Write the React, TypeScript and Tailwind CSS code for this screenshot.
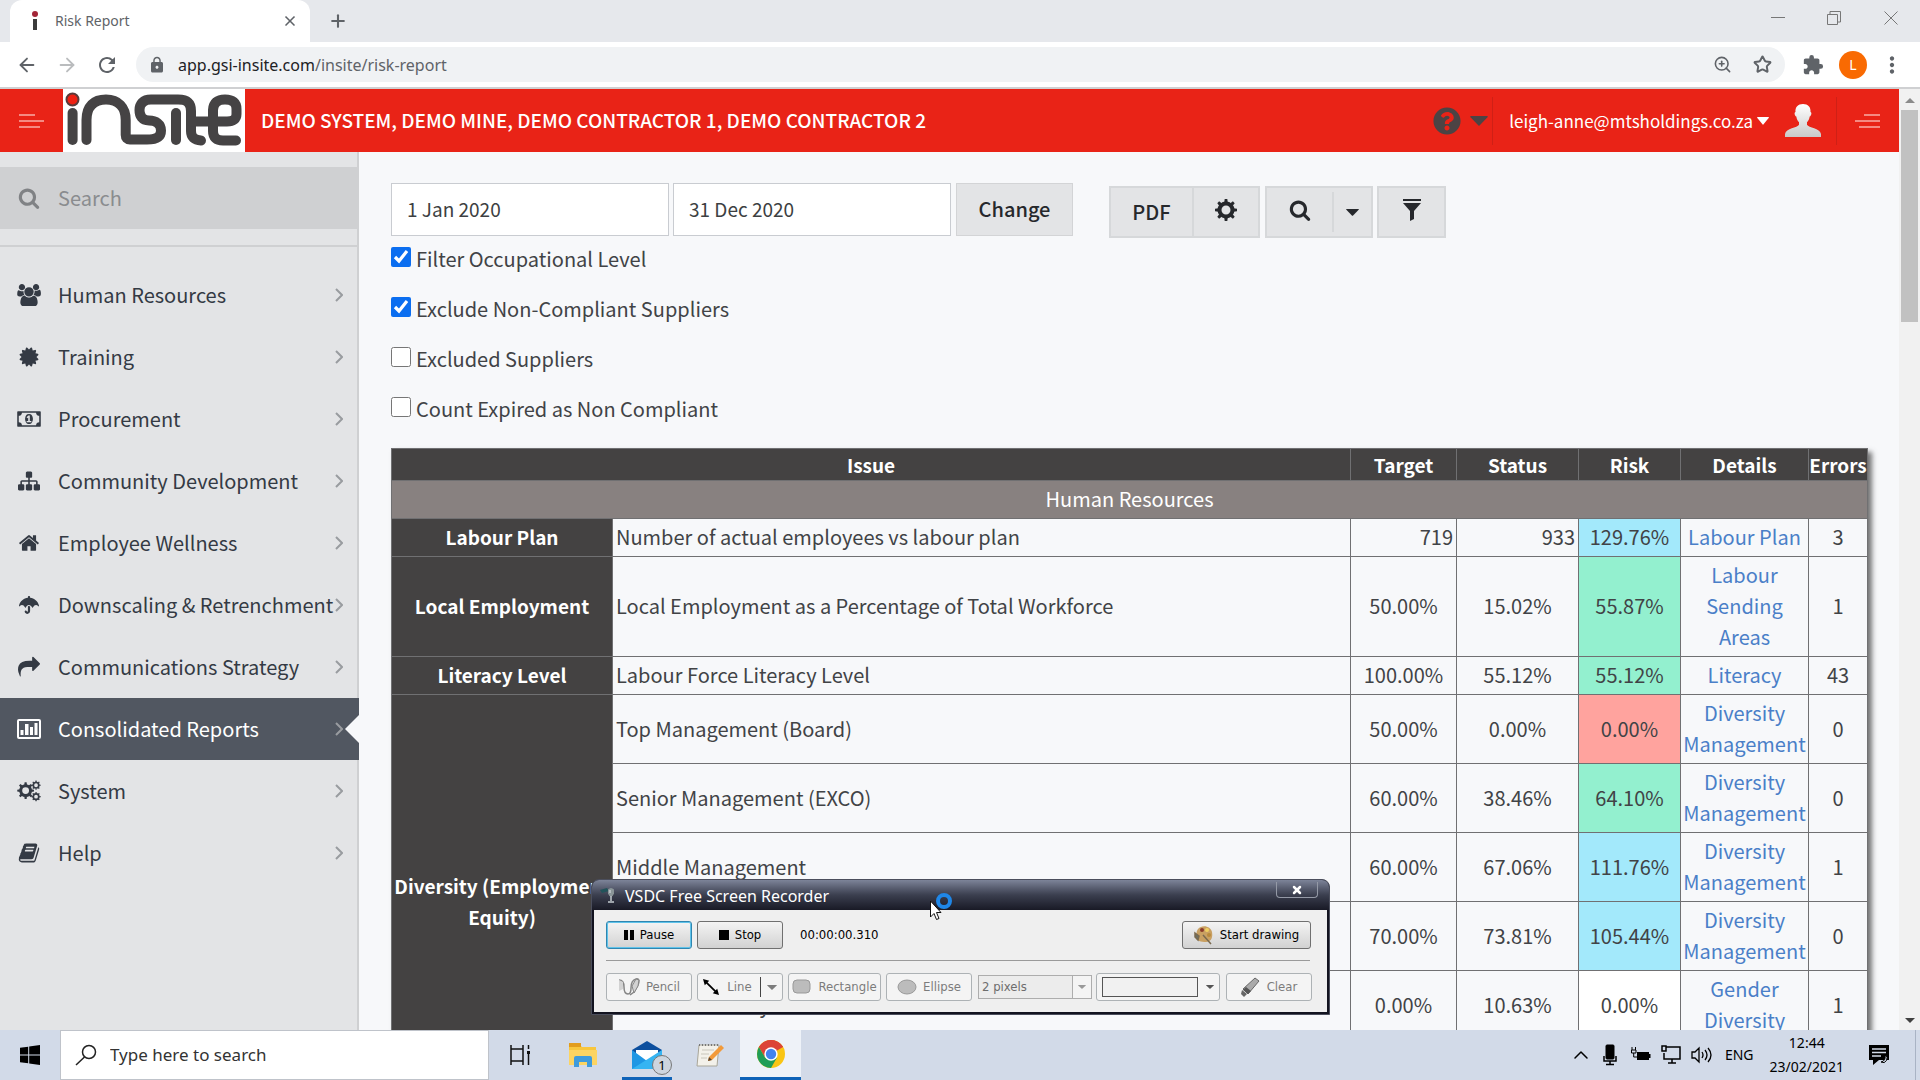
import type { ReactNode } from "react";
import { ArrowLeft, ArrowRight, Plus, X, ZoomIn, Star, ChevronUp } from "lucide-react";
import { FaQuestionCircle, FaUmbrella } from "react-icons/fa";
import { MdExtension, MdLock, MdMoreVert, MdRefresh } from "react-icons/md";

const icons = {
  search:
    "M1216 832q0-185-131.5-316.5t-316.5-131.5-316.5 131.5-131.5 316.5 131.5 316.5 316.5 131.5 316.5-131.5 131.5-316.5zm512 832q0 52-38 90t-90 38q-54 0-90-38l-343-342q-179 124-399 124-143 0-273.5-55.5t-225-150-150-225-55.5-273.5 55.5-273.5 150-225 225-150 273.5-55.5 273.5 55.5 225 150 150 225 55.5 273.5q0 220-124 399l343 343q37 37 37 90z",
  users:
    "M593 896q-162 5-265 128h-134q-82 0-138-40.5t-56-118.5q0-353 124-353 6 0 43.5 21t97.5 42.5 119 21.5q67 0 133-23-5 37-5 66 0 159 93 293zm1071 637q0 120-73 189.5t-194 69.5h-874q-121 0-194-69.5t-73-189.5q0-53 3.5-103.5t14-109 26.5-108.5 43-97.5 62-81 85.5-53.5 111.5-20q10 0 43 21.5t73 48 107 48 135 21.5 135-21.5 107-48 73-48 43-21.5q61 0 111.5 20t85.5 53.5 62 81 43 97.5 26.5 108.5 14 109 3.5 103.5zm-1024-1277q0 106-75 181t-181 75-181-75-75-181 75-181 181-75 181 75 75 181zm704 384q0 159-112.5 271.5t-271.5 112.5-271.5-112.5-112.5-271.5 112.5-271.5 271.5-112.5 271.5 112.5 112.5 271.5zm576 225q0 78-56 118.5t-138 40.5h-134q-103-123-265-128 93-134 93-293 0-29-5-66 66 23 133 23 59 0 119-21.5t97.5-42.5 43.5-21q124 0 124 353zm-128-609q0 106-75 181t-181 75-181-75-75-181 75-181 181-75 181 75 75 181z",
  certificate:
    "M1504 896l138 135q30 28 20 70-12 41-52 51l-188 48 53 186q12 41-19 70-29 31-70 19l-186-53-48 188q-10 40-51 52-12 2-19 2-31 0-51-22l-135-138-135 138q-28 30-70 20-41-11-51-52l-48-188-186 53q-41 12-70-19-31-29-19-70l53-186-188-48q-40-10-52-51-10-42 20-70l138-135-138-135q-30-28-20-70 12-41 52-51l188-48-53-186q-12-41 19-70 29-31 70-19l186 53 48-188q10-41 51-51 41-12 70 19l135 139 135-139q29-30 70-19 41 10 51 51l48 188 186-53q41-12 70 19 31 29 19 70l-53 186 188 48q40 10 52 51 10 42-20 70z",
  money:
    "M768 1152h384v-96h-128v-448h-114l-148 137 77 80q42-37 55-57h2v288h-128v96zm512-256q0 70-21 142t-59.5 134-101.5 101-138 39-138-39-101.5-101-59.5-134-21-142 21-142 59.5-134 101.5-101 138-39 138 39 101.5 101 59.5 134 21 142zm512 256v-512q-106 0-181-75t-75-181h-1152q0 106-75 181t-181 75v512q106 0 181 75t75 181h1152q0-106 75-181t181-75zm128-832v1152q0 26-19 45t-45 19h-1792q-26 0-45-19t-19-45v-1152q0-26 19-45t45-19h1792q26 0 45 19t19 45z",
  sitemap:
    "M1792 1248v320q0 40-28 68t-68 28h-320q-40 0-68-28t-28-68v-320q0-40 28-68t68-28h96v-192h-512v192h96q40 0 68 28t28 68v320q0 40-28 68t-68 28h-320q-40 0-68-28t-28-68v-320q0-40 28-68t68-28h96v-192h-512v192h96q40 0 68 28t28 68v320q0 40-28 68t-68 28h-320q-40 0-68-28t-28-68v-320q0-40 28-68t68-28h96v-192q0-52 38-90t90-38h512v-192h-96q-40 0-68-28t-28-68v-320q0-40 28-68t68-28h320q40 0 68 28t28 68v320q0 40-28 68t-68 28h-96v192h512q52 0 90 38t38 90v192h96q40 0 68 28t28 68z",
  home: "M1472 992v480q0 26-19 45t-45 19h-384v-384h-256v384h-384q-26 0-45-19t-19-45v-480q0-1 .5-3t.5-3l575-474 575 474q1 2 1 6zm223-69l-62 74q-8 9-21 11h-3q-13 0-21-7l-692-577-692 577q-12 8-24 7-13-2-21-11l-62-74q-8-10-7-23.5t11-21.5l719-599q32-26 76-26t76 26l244 204v-195q0-14 9-23t23-9h192q14 0 23 9t9 23v408l219 182q10 8 11 21.5t-7 23.5z",
  share:
    "M1792 640q0 26-19 45l-512 512q-19 19-45 19t-45-19-19-45v-256h-224q-98 0-175.5 6t-154 21.5-133 42.5-105.5 69.5-80 101-48.5 138.5-17.5 181q0 55 5 123 0 6 2.5 23.5t2.5 26.5q0 15-8.5 25t-23.5 10q-16 0-28-17-7-9-13-22t-13.5-30-10.5-24q-127-285-127-451 0-199 53-333 162-403 875-403h224v-256q0-26 19-45t45-19 45 19l512 512q19 19 19 45z",
  book: "M1703 478q40 57 18 129l-275 906q-19 64-76.5 107.5t-122.5 43.5h-923q-77 0-148.5-53.5t-99.5-131.5q-24-67-2-127 0-4 3-27t4-37q1-8-3-21.5t-3-19.5q2-11 8-21t16.5-23.5 16.5-23.5q23-38 45-91.5t30-91.5q3-10 .5-30t-.5-28q3-11 17-28t17-23q21-36 42-92t25-90q1-9-2.5-32t.5-28q4-13 22-30.5t22-22.5q19-26 42.5-84.5t27.5-96.5q1-8-3-25.5t-2-26.5q2-8 9-18t18-23 17-21q8-12 16.5-30.5t15-35 16-36 19.5-32 26.5-23.5 36-11.5 47.5 5.5l-1 3q38-9 51-9h761q74 0 114 56t18 130l-274 906q-36 119-71.5 153.5t-128.5 34.5h-869q-27 0-38 15-11 16-1 43 24 70 144 70h923q29 0 56-15.5t35-41.5l300-987q7-22 5-57 38 15 59 43zm-1064 2q-4 13 2 22.5t20 9.5h608q13 0 25.5-9.5t16.5-22.5l21-64q4-13-2-22.5t-20-9.5h-608q-13 0-25.5 9.5t-16.5 22.5zm-83 256q-4 13 2 22.5t20 9.5h608q13 0 25.5-9.5t16.5-22.5l21-64q4-13-2-22.5t-20-9.5h-608q-13 0-25.5 9.5t-16.5 22.5z",
};

const Glyph = ({ d, wide = false, className = "size-[22px]" }: { d: string; wide?: boolean; className?: string }) => (
  <svg viewBox={wide ? "0 0 1920 1792" : "0 0 1792 1792"} fill="currentColor" className={className} aria-hidden="true">
    <path d={d} />
  </svg>
);

const Caret = ({ className }: { className: string }) => (
  <svg viewBox="0 0 18 10" preserveAspectRatio="none" fill="currentColor" className={className} aria-hidden="true">
    <path d="M1 0h16q1.500 0 .5 1.200l-8 8.300q-.5.500-1 0l-8-8.300Q-.5 0 1 0z" />
  </svg>
);

const teeth = [0, 45, 90, 135, 180, 225, 270, 315];

const GearShape = () => (
  <>
    <circle cx="12" cy="12" r="6.500" fill="none" stroke="currentColor" strokeWidth="4" />
    {teeth.map((angle) => (
      <path key={angle} d="M10.200 4.500 10.700 1h2.600l.5 3.500z" fill="currentColor" transform={`rotate(${angle} 12 12)`} />
    ))}
  </>
);

const Gears = () => (
  <svg viewBox="0 0 24 22" className="h-[22px] w-6" aria-hidden="true">
    <g transform="translate(-.5 1.5) scale(.76)">
      <GearShape />
    </g>
    <g transform="translate(14 .2) scale(.42)">
      <GearShape />
    </g>
    <g transform="translate(14 11.6) scale(.42)">
      <GearShape />
    </g>
  </svg>
);

const BarChart = () => (
  <svg viewBox="0 0 24 20" className="h-5 w-6" aria-hidden="true">
    <rect x="1" y="1" width="22" height="18" rx="1" fill="none" stroke="currentColor" strokeWidth="2" />
    <path d="M3.500 11h3v5h-3zM8 5h3.500v11H8zM13 8h3v8h-3zM17.500 4h3v12h-3z" fill="currentColor" />
  </svg>
);

const Logo = () => (
  <svg viewBox="0 0 182 63" className="h-[63px] w-[182px] bg-white" role="img" aria-label="insite">
    <g fill="none" stroke="#454344" strokeWidth="10" strokeLinecap="round" strokeLinejoin="round">
      <path d="M9.600 24V51" />
      <path d="M23.500 51V31C23.500 17 31 10.500 43 10.500S62.700 18 62.700 31V46Q62.700 50.500 67 50.500H84C93 50.500 98 48 98 41.500S93 31.500 86 31.500C79 31.500 76.500 27 76.500 21S80 10.500 88 10.500H115C124 10.500 128 14 128 22V42Q128 51 138 51.500" />
      <path d="M113 24V51" />
      <path d="M128 32.500H164Q173.500 32.500 173.500 25V20Q173.500 10.500 162 10.500T150 21V42Q150 51.500 160 51.500H173" />
    </g>
    <circle cx="9.500" cy="10.500" r="6" fill="#ee2012" stroke="#5a3a3a" strokeWidth="2" />
  </svg>
);

type NavItem = { label: string; icon: ReactNode; active?: boolean };

const navItems: NavItem[] = [
  { label: "Human Resources", icon: <Glyph d={icons.users} wide className="h-[22px] w-6" /> },
  { label: "Training", icon: <Glyph d={icons.certificate} /> },
  { label: "Procurement", icon: <Glyph d={icons.money} wide className="h-[22px] w-6" /> },
  { label: "Community Development", icon: <Glyph d={icons.sitemap} /> },
  { label: "Employee Wellness", icon: <Glyph d={icons.home} /> },
  { label: "Downscaling & Retrenchment", icon: <FaUmbrella className="size-5" /> },
  { label: "Communications Strategy", icon: <Glyph d={icons.share} /> },
  { label: "Consolidated Reports", icon: <BarChart />, active: true },
  { label: "System", icon: <Gears /> },
  { label: "Help", icon: <Glyph d={icons.book} /> },
];

const filters = [
  { id: "occupational", label: "Filter Occupational Level", checked: true },
  { id: "non-compliant", label: "Exclude Non-Compliant Suppliers", checked: true },
  { id: "excluded", label: "Excluded Suppliers", checked: false },
  { id: "expired", label: "Count Expired as Non Compliant", checked: false },
];

type Row = {
  group?: string;
  span?: number;
  issue: string;
  target: string;
  status: string;
  risk: string;
  tone: string;
  details: string;
  errors: number;
  numeric?: boolean;
};

const blue = "bg-[#a3e9fb]";
const green = "bg-[#93f0cf]";
const red = "bg-[#ffa39e]";

const rows: Row[] = [
  { group: "Labour Plan", issue: "Number of actual employees vs labour plan", target: "719", status: "933", risk: "129.76%", tone: blue, details: "Labour Plan", errors: 3, numeric: true },
  { group: "Local Employment", issue: "Local Employment as a Percentage of Total Workforce", target: "50.00%", status: "15.02%", risk: "55.87%", tone: green, details: "Labour Sending Areas", errors: 1 },
  { group: "Literacy Level", issue: "Labour Force Literacy Level", target: "100.00%", status: "55.12%", risk: "55.12%", tone: green, details: "Literacy", errors: 43 },
  { group: "Diversity (Employment Equity)", span: 6, issue: "Top Management (Board)", target: "50.00%", status: "0.00%", risk: "0.00%", tone: red, details: "Diversity Management", errors: 0 },
  { issue: "Senior Management (EXCO)", target: "60.00%", status: "38.46%", risk: "64.10%", tone: green, details: "Diversity Management", errors: 0 },
  { issue: "Middle Management", target: "60.00%", status: "67.06%", risk: "111.76%", tone: blue, details: "Diversity Management", errors: 1 },
  { issue: "Junior Management", target: "70.00%", status: "73.81%", risk: "105.44%", tone: blue, details: "Diversity Management", errors: 0 },
  { issue: "Gender Diversity", target: "0.00%", status: "10.63%", risk: "0.00%", tone: "bg-white", details: "Gender Diversity", errors: 1 },
  { issue: "Core Skills", target: "60.00%", status: "0.00%", risk: "0.00%", tone: "bg-white", details: "Diversity Management", errors: 0 },
];

const BrowserChrome = () => (
  <header className="shrink-0 font-['Noto_Sans','Open_Sans',sans-serif] text-[#5f6368]">
    <div className="flex h-[42px] items-end bg-[#e6e8ec] pl-[10px]">
      <div className="flex h-full w-[300px] items-center rounded-t-xl bg-white pl-[18px] pr-[10px]">
        <svg viewBox="0 0 14 22" className="h-[22px] w-[14px]" aria-hidden="true">
          <circle cx="7" cy="4" r="3" fill="#a32638" />
          <path d="M7 9v11" stroke="#3c3c3c" strokeWidth="4" />
        </svg>
        <span className="ml-[13px] flex-1 text-sm">Risk Report</span>
        <button aria-label="Close tab" className="p-0.5">
          <X className="size-4" strokeWidth={2.5} />
        </button>
      </div>
      <button aria-label="New tab" className="ml-[18px] self-center">
        <Plus className="size-5" strokeWidth={2.5} />
      </button>
      <div className="ml-auto flex h-9 items-center self-start pr-[22px] text-[#777]">
        <button aria-label="Minimize" className="mr-[42px]">
          <svg viewBox="0 0 14 14" className="size-[14px]" stroke="currentColor">
            <path d="M0 6.500h14" />
          </svg>
        </button>
        <button aria-label="Restore" className="mr-[43px]">
          <svg viewBox="0 0 14 14" className="size-[14px]" fill="none" stroke="currentColor">
            <path d="M.5 3.500h10v10H.5zM3 3.500v-3h10.500V11H11" />
          </svg>
        </button>
        <button aria-label="Close">
          <svg viewBox="0 0 14 14" className="size-[14px]" stroke="currentColor">
            <path d="M.5.500l13 13M13.500.500l-13 13" />
          </svg>
        </button>
      </div>
    </div>
    <div className="flex h-[47px] items-center border-b-2 border-[#cfd0d2] bg-white pl-4">
      <button aria-label="Back">
        <ArrowLeft className="size-[22px]" />
      </button>
      <button aria-label="Forward" className="ml-[18px] text-[#babcbe]">
        <ArrowRight className="size-[22px]" />
      </button>
      <button aria-label="Reload" className="ml-[17px]">
        <MdRefresh className="size-6" />
      </button>
      <div className="ml-[17px] flex h-[35px] flex-1 items-center rounded-full bg-[#f0f2f4] pl-3 pr-[13px]">
        <MdLock className="size-[18px]" />
        <span className="ml-3 flex-1 text-base">
          <span className="text-[#202124]">app.gsi-insite.com</span>/insite/risk-report
        </span>
        <button aria-label="Zoom">
          <ZoomIn className="size-[19px]" />
        </button>
        <button aria-label="Bookmark" className="ml-[21px]">
          <Star className="size-[19px]" strokeWidth={2.5} strokeLinejoin="miter" />
        </button>
      </div>
      <button aria-label="Extensions" className="ml-[17px]">
        <MdExtension className="size-[22px]" />
      </button>
      <button aria-label="Profile" className="ml-[15px] size-7 rounded-full bg-[#f96a02] text-sm text-white">
        L
      </button>
      <button aria-label="Menu" className="ml-3 mr-[15px]">
        <MdMoreVert className="size-[26px]" />
      </button>
    </div>
  </header>
);

const TopBar = () => (
  <div className="flex h-[63px] shrink-0 items-center bg-[#e92317] text-white">
    <button aria-label="Toggle menu" className="w-[63px] pl-[19px]">
      <svg viewBox="0 0 25 16" className="h-4 w-[25px]" stroke="#f58a82" strokeWidth="2">
        <path d="M0 2h16M0 8h25M0 14h21" />
      </svg>
    </button>
    <a href="#home">
      <Logo />
    </a>
    <h1 className="ml-4 flex-1 text-[19px] font-medium">DEMO SYSTEM, DEMO MINE, DEMO CONTRACTOR 1, DEMO CONTRACTOR 2</h1>
    <button aria-label="Help" className="flex items-center gap-[9px] pr-1 text-[#4c4344]">
      <FaQuestionCircle className="size-7" />
      <Caret className="h-[10px] w-[18px]" />
    </button>
    <button className="flex h-12 items-center border-l border-[#cf2016] pl-4 text-[17px]">
      leigh-anne@mtsholdings.co.za
      <Caret className="ml-1 h-2 w-3" />
      <svg viewBox="0 0 36 33" className="ml-4 mr-[15px] h-[33px] w-9" aria-hidden="true">
        <defs>
          <linearGradient id="person" x1="0" y1="0" x2="0" y2="1">
            <stop offset="0" stopColor="#fff" />
            <stop offset="1" stopColor="#c9c9c9" />
          </linearGradient>
        </defs>
        <path
          fill="url(#person)"
          d="M18 0c5 0 8 3 7.500 8 1.500 0 1 4-.8 4.500-.5 3-1.500 4.500-2.700 5.700v2.500c1.500 3 13 3.300 14 9.300v3H0v-3c1-6 12.500-6.300 14-9.300v-2.500c-1.200-1.200-2.200-2.700-2.700-5.700C9.500 12 9 8 10.500 8 10 3 13 0 18 0z"
        />
      </svg>
    </button>
    <button aria-label="Toggle sidebar" className="flex h-12 items-center border-l border-[#cf2016] pl-[18px] pr-[19px]">
      <svg viewBox="0 0 25 16" className="h-4 w-[25px]" stroke="#f58a82" strokeWidth="2">
        <path d="M9 2h16M0 8h25M4 14h21" />
      </svg>
    </button>
  </div>
);

const Sidebar = () => (
  <aside className="flex w-[359px] shrink-0 flex-col border-r-2 border-[#cfd0d2] bg-[#e3e4e6] pt-[15px] text-[#343a44]">
    <label className="-mr-0.5 flex h-[62px] items-center bg-[#cfd0d2] pl-[18px] text-[#808285]">
      <Glyph d={icons.search} className="size-[22px]" />
      <input
        aria-label="Search"
        placeholder="Search"
        className="ml-[18px] w-60 bg-transparent text-[20px] outline-none placeholder:text-[#8a8c8f]"
      />
    </label>
    <nav className="-mr-0.5 mt-4 border-t-2 border-[#cfd0d2] pt-[17px]">
      <ul>
        {navItems.map((item) => (
          <li key={item.label}>
            <a
              href="#nav"
              className={`relative flex h-[62px] items-center text-[20px] ${item.active ? "bg-[#515761] text-white" : ""}`}
            >
              <span className="flex w-[58px] justify-center">{item.icon}</span>
              <span className="flex-1 whitespace-nowrap">{item.label}</span>
              <svg viewBox="0 0 8 14" className="mr-4 h-[14px] w-2" fill="none" stroke="#999ca0" strokeWidth="2">
                <path d="M1 1l6 6-6 6" />
              </svg>
              {item.active && (
                <svg viewBox="0 0 14 28" className="absolute right-0 top-[17px] h-7 w-[14px]" fill="#f7f8fa">
                  <path d="M14 0v28L0 14z" />
                </svg>
              )}
            </a>
          </li>
        ))}
      </ul>
    </nav>
  </aside>
);

const dateInput = "h-[53px] w-[278px] border border-[#c9ccd1] bg-white px-[15px] pb-0.5 text-[19px] text-[#3d3f42]";

const Toolbar = () => (
  <div className="flex items-start text-[#26282c]">
    <input aria-label="From date" defaultValue="1 Jan 2020" className={dateInput} />
    <input aria-label="To date" defaultValue="31 Dec 2020" className={`${dateInput} ml-1`} />
    <button className="ml-[5px] h-[53px] w-[117px] border border-[#d3d4d6] bg-[#e3e4e6] pb-0.5 text-[20px] font-medium">
      Change
    </button>
    <div className="ml-9 mt-[3px] flex h-[52px] border-2 border-[#d6d8da] bg-[#e3e4e6]">
      <button className="w-[83px] border-r-2 border-[#d6d8da] text-[20px] font-medium">PDF</button>
      <button aria-label="Settings" className="flex w-16 items-center justify-center pb-1">
        <svg viewBox="0 0 24 24" className="size-6">
          <GearShape />
        </svg>
      </button>
    </div>
    <div className="ml-[5px] mt-[3px] flex h-[52px] items-center border-2 border-[#d6d8da] bg-[#e3e4e6]">
      <button
        aria-label="Search report"
        className="flex h-10 w-[67px] items-center justify-center border-r-2 border-[#d6d8da] pb-1"
      >
        <Glyph d={icons.search} />
      </button>
      <button aria-label="Search options" className="flex w-[37px] items-center justify-center">
        <Caret className="h-[7px] w-[13px]" />
      </button>
    </div>
    <button
      aria-label="Filter"
      className="ml-1 mt-[3px] flex h-[52px] w-[69px] items-center justify-center border-2 border-[#d6d8da] bg-[#e3e4e6] pb-1"
    >
      <svg viewBox="0 0 20 22" className="h-[22px] w-5" fill="currentColor">
        <path d="M1 0h18v2H1zM1 4h18l-7 8v8l-4 2V12z" />
      </svg>
    </button>
  </div>
);

const Filters = () => (
  <div className="mt-[6px]">
    {filters.map((filter) => (
      <div key={filter.id} className="flex h-[50px] items-start gap-[5px]">
        <input id={filter.id} type="checkbox" defaultChecked={filter.checked} className="mt-[3px] size-5 accent-[#0b6ef0]" />
        <label htmlFor={filter.id} className="text-[20px] leading-[30px]">
          {filter.label}
        </label>
      </div>
    ))}
  </div>
);

const line = "border border-[#707072]";
const cell = `${line} px-[3px] pt-0.5 pb-1`;
const columns = ["Target", "Status", "Risk", "Details", "Errors"];

const RiskTable = () => (
  <table className="mt-1 w-full table-fixed border-collapse text-center text-[20px] leading-[31px] shadow-[4px_4px_5px_rgba(60,60,60,0.7)]">
    <colgroup>
      <col className="w-[221px]" />
      <col />
      <col className="w-[106px]" />
      <col className="w-[122px]" />
      <col className="w-[102px]" />
      <col className="w-[128px]" />
      <col className="w-[59px]" />
    </colgroup>
    <thead className="bg-[#444242] text-[19px] text-white">
      <tr>
        <th colSpan={2} className={line}>
          Issue
        </th>
        {columns.map((column) => (
          <th key={column} className={line}>
            {column}
          </th>
        ))}
      </tr>
    </thead>
    <tbody>
      <tr className="bg-[#888180] text-white">
        <td colSpan={7} className={cell}>
          Human Resources
        </td>
      </tr>
      {rows.map((row) => (
        <tr key={row.issue}>
          {row.group && (
            <th rowSpan={row.span} className={`${line} bg-[#444242] pb-0.5 text-[19px] text-white`}>
              {row.group}
            </th>
          )}
          <td className={`${cell} text-left`}>{row.issue}</td>
          <td className={`${cell} ${row.numeric ? "text-right" : ""}`}>{row.target}</td>
          <td className={`${cell} ${row.numeric ? "text-right" : ""}`}>{row.status}</td>
          <td className={`${cell} ${row.tone}`}>{row.risk}</td>
          <td className={`${line} pb-1 pt-0.5`}>
            <a href="#details" className="text-[#4a7fc8]">
              {row.details}
            </a>
          </td>
          <td className={cell}>{row.errors}</td>
        </tr>
      ))}
    </tbody>
  </table>
);

const Scrollbar = () => (
  <div className="flex w-[21px] shrink-0 flex-col items-center bg-[#f1f1f1]">
    <svg viewBox="0 0 20 21" className="h-[21px] w-5" fill="#8b8b8b">
      <path d="M5 14h10l-5-5z" />
    </svg>
    <div className="h-[212px] w-[17px] bg-[#c1c1c1]" />
    <svg viewBox="0 0 20 20" className="mt-auto size-5" fill="#404040">
      <path d="M5 8h10l-5 5z" />
    </svg>
  </div>
);

const enabledButton =
  "flex h-7 items-center justify-center rounded-[3px] border bg-linear-to-b from-[#f4f4f4] to-[#d2d2d2] text-black";
const disabledButton = "flex h-7 items-center justify-center rounded-[3px] border border-[#adb2b5] bg-[#f4f4f4] text-[#7c7c7c]";

const RecorderWindow = () => (
  <section
    aria-label="VSDC Free Screen Recorder"
    className="absolute bottom-[65px] left-[591px] w-[739px] rounded-t-lg border border-[#4b4e5c] bg-[#12131f] font-['DejaVu_Sans_Condensed','DejaVu_Sans',sans-serif] text-[13px]"
  >
    <div className="flex h-[30px] items-start rounded-t-[7px] bg-linear-to-b from-[#7d8499] via-[#3b3f4f] to-[#191a26] pl-2 pr-[11px]">
      <svg viewBox="0 0 18 18" className="mt-1.5 h-[18px] w-[18px]" fill="none">
        <path d="M0 4l7-2 2 3-7 2z" fill="#22535a" />
        <path d="M8 3.500q3-3 6 0v4q-1 3-3 3t-3-3z" fill="#8a9598" />
        <path d="M11 10v5M8 16h6M10 4v3" stroke="#c3cccf" strokeWidth="1.500" />
      </svg>
      <h2 className="ml-[7px] flex-1 font-['Noto_Sans',sans-serif] text-base leading-8 text-white">VSDC Free Screen Recorder</h2>
      <button
        aria-label="Close recorder"
        className="mt-0.5 flex h-4 w-[42px] items-center justify-center rounded-b-[4px] border border-t-0 border-[#9499a6] text-white"
      >
        <X className="h-3 w-3" strokeWidth={5} />
      </button>
    </div>
    <div className="mx-[2px] mb-[2px] h-[102px] bg-[#efefef] px-3 pt-[11px]">
      <div className="flex items-center">
        <button className={`${enabledButton} w-[86px] gap-[6px] border-[#2f86b0] ring-1 ring-inset ring-[#5fc3ea]`}>
          <svg viewBox="0 0 10 10" className="size-[10px]">
            <path d="M0 0h4v10H0zM6 0h4v10H6z" />
          </svg>
          Pause
        </button>
        <button className={`${enabledButton} ml-[5px] w-[86px] gap-[6px] border-[#707070]`}>
          <span className="size-[10px] bg-black" />
          Stop
        </button>
        <span className="ml-[17px] flex-1 text-black">00:00:00.310</span>
        <button className={`${enabledButton} mr-1 w-[129px] gap-[6px] border-[#707070]`}>
          <svg viewBox="0 0 20 20" className="size-5">
            <path d="M4 4C8-1 17 1 18 7s-1 10-6 10-11-1-10-6c1-3 0-4 2-7z" fill="#c9a062" />
            <circle cx="8" cy="5" r="2" fill="#8b3a2a" />
            <circle cx="13" cy="5" r="2" fill="#f0d060" />
            <circle cx="15" cy="10" r="2" fill="#b98a3c" />
            <path d="M1 8l4 3-1 4-3-3zM9 10l8 9" stroke="#7a6a50" strokeWidth="1.500" fill="#6c6f63" />
          </svg>
          Start drawing
        </button>
      </div>
      <hr className="mb-3 mr-[5px] mt-[11px] border-[#9a9a9a]" />
      <div className="flex items-center">
        <button disabled className={`${disabledButton} w-[86px] gap-[6px]`}>
          <svg viewBox="0 0 22 20" className="h-5 w-[22px]" fill="#d2d2d2" stroke="#858585">
            <path d="M1 3c4 0 5 3 5 7s1 7 4 7 3-3 3-6 1-8 5-9 3 3 2 6l-4 7-4 3" fill="none" strokeWidth="1.500" />
            <path d="M1 3l4 2v7l-4 2z" stroke="none" />
            <path d="M14 9l4-7 3 1-1 6-4 7z" />
          </svg>
          Pencil
        </button>
        <button disabled className={`${disabledButton} ml-[5px] w-[86px]`}>
          <svg viewBox="0 0 18 18" className="mr-2 size-4">
            <path d="M2 2l14 14" stroke="#000" strokeWidth="2" />
            <path d="M0 0l7 2-5 5zM18 18l-7-2 5-5z" />
          </svg>
          Line
          <span className="ml-2 mr-[6px] h-5 w-px bg-[#444]" />
          <Caret className="h-[5px] w-[10px]" />
        </button>
        <button disabled className={`${disabledButton} ml-[5px] w-[93px] gap-[6px]`}>
          <svg viewBox="0 0 20 16" className="h-4 w-5" fill="#bcbcbc" stroke="#999">
            <rect x="1" y="1" width="17" height="13" rx="4" />
          </svg>
          Rectangle
        </button>
        <button disabled className={`${disabledButton} ml-[5px] w-[86px] gap-[6px]`}>
          <svg viewBox="0 0 20 16" className="h-4 w-5" fill="#bcbcbc" stroke="#999">
            <ellipse cx="10" cy="8" rx="9" ry="7" />
          </svg>
          Ellipse
        </button>
        <div className="relative ml-[6px] h-6 w-[114px]">
          <select
            disabled
            aria-label="Line width"
            className="h-full w-full appearance-none border border-[#adadad] bg-[#ececec] px-[3px] text-[#6d6d6d] opacity-100"
          >
            <option>2 pixels</option>
          </select>
          <span className="absolute right-px top-px flex h-[22px] w-[19px] items-center justify-center border-l border-[#adadad] bg-[#f4f4f4] text-[#999]">
            <Caret className="h-1 w-2" />
          </span>
        </div>
        <button disabled aria-label="Colour" className={`${disabledButton} ml-1 w-[124px] gap-2`}>
          <span className="h-5 w-24 border border-[#555] bg-[#f1f1f1]" />
          <Caret className="h-1 w-2 text-[#555]" />
        </button>
        <button disabled className={`${disabledButton} ml-[6px] w-[86px] gap-[6px]`}>
          <svg viewBox="0 0 20 20" className="size-5">
            <path d="M1 13l5 4-3 3-3-3z" fill="#666" />
            <path d="M2 12L14 1l4 3L7 17z" fill="#aaa" stroke="#666" />
            <path d="M5 10l5 4-3 3-5-4z" fill="#555" />
          </svg>
          Clear
        </button>
      </div>
    </div>
  </section>
);

const Cursor = () => (
  <svg viewBox="0 0 24 28" className="pointer-events-none absolute bottom-[160px] left-[929px] h-7 w-6" aria-hidden="true">
    <circle cx="15" cy="9" r="6" fill="none" stroke="#1f87e8" strokeWidth="4" />
    <path d="M1.500 9v16l3.500-3.500 2.500 6 2.500-1-2.500-6h4.500z" fill="#fff" stroke="#111" />
  </svg>
);

const Taskbar = () => (
  <footer className="flex h-[50px] shrink-0 items-center bg-[#d2dae8] font-['Noto_Sans','Open_Sans',sans-serif] text-black">
    <button aria-label="Start" className="flex w-[60px] justify-center">
      <svg viewBox="0 0 20 20" className="size-5">
        <path d="M0 2.800l8.200-1.100v7.800H0zM9.200 1.500L20 0v9.500H9.200zM0 10.500h8.200v7.800L0 17.200zM9.200 10.500H20V20L9.200 18.500z" />
      </svg>
    </button>
    <label className="flex h-full w-[429px] items-center border border-[#bfc3ca] bg-white pl-[14px]">
      <svg viewBox="0 0 22 22" className="size-[22px]" fill="none" stroke="#222" strokeWidth="1.500">
        <circle cx="14" cy="8" r="6.500" />
        <path d="M9.500 13L1 21" />
      </svg>
      <input
        aria-label="Type here to search"
        placeholder="Type here to search"
        className="ml-[13px] flex-1 text-[17px] outline-none placeholder:text-[#333]"
      />
    </label>
    <button aria-label="Task view" className="flex w-[62px] justify-center">
      <svg viewBox="0 0 20 20" className="size-5" fill="none" stroke="#111" strokeWidth="1.500">
        <path d="M1 0v4h12V0M1 20v-4h12v4M1 4v12M13 4v12M18.500 0v4M18.500 9v11" />
        <path d="M17 6h3v3h-3z" fill="#111" stroke="none" />
      </svg>
    </button>
    <button aria-label="File Explorer" className="flex w-[64px] justify-center">
      <svg viewBox="0 0 28 24" className="h-6 w-7">
        <path d="M0 1h10l3 3h14v18H0z" fill="#f8c63c" />
        <path d="M0 0h12v4H0z" fill="#e29c1c" />
        <path d="M0 7h28v15H0z" fill="#fcd462" />
        <path d="M5 24V15q0-2 2-2h14q2 0 2 2v9h-5v-5h-8v5z" fill="#3f9bdc" />
      </svg>
    </button>
    <button aria-label="Mail, 1 unread" className="relative flex h-full w-16 items-center justify-center">
      <svg viewBox="0 0 30 28" className="h-7 w-[30px]">
        <path d="M0 9L15 0l15 9v4H0z" fill="#0d4f9e" />
        <path d="M4 9h22v10H4z" fill="#fff" />
        <path d="M0 9l15 11L30 9v19H0z" fill="#1f97e4" />
        <path d="M0 28L30 9v19z" fill="#35b4f2" />
      </svg>
      <span className="absolute bottom-[5px] right-[7px] flex size-5 items-center justify-center rounded-full border border-[#777] bg-[#cdd5df] text-[13px] leading-none">
        1
      </span>
      <span className="absolute inset-x-[7px] bottom-0 h-[3px] bg-[#0f63b8]" />
    </button>
    <button aria-label="Notes" className="flex w-[61px] justify-center">
      <svg viewBox="0 0 28 26" className="h-[26px] w-7">
        <path d="M3 3h20l-2 21H1z" fill="#f3f1ea" stroke="#a9a699" />
        <path d="M3 3h20" stroke="#777" strokeWidth="2" strokeDasharray="1 2" />
        <path d="M6 8h12M5 12h8M5 16h6" stroke="#c9c6bb" />
        <path d="M25 3l3 3-12 12-4 1 1-4z" fill="#f29a3a" />
        <path d="M12 19l1-4 3 3z" fill="#5c4630" />
      </svg>
    </button>
    <button aria-label="Chrome" className="flex h-full w-[61px] items-center justify-center border-b-[3px] border-[#0f63b8] bg-[#eef2f8]">
      <svg viewBox="0 0 28 28" className="size-7">
        <circle cx="14" cy="14" r="14" fill="#f9c514" />
        <path d="M14 14L1.900 7A14 14 0 0 1 26.100 7z" fill="#dc4437" />
        <path d="M14 7h12.100A14 14 0 0 0 1.900 7L8 17.500z" fill="#dc4437" />
        <path d="M1.900 7A14 14 0 0 0 14 28l6-10.500-12 0z" fill="#1f9d57" />
        <circle cx="14" cy="14" r="6.700" fill="#fff" />
        <circle cx="14" cy="14" r="5.200" fill="#4383ec" />
      </svg>
    </button>
    <div className="ml-auto flex h-full items-center">
      <button aria-label="Show hidden icons">
        <ChevronUp className="size-6" strokeWidth={1.5} />
      </button>
      <svg viewBox="0 0 14 22" className="ml-[10px] h-[22px] w-[14px]" fill="none" stroke="#000">
        <rect x="3" y="1" width="8" height="14" rx="1" fill="#000" />
        <path d="M1 12v5h12v-5M7 17v4M3 20.500h8" strokeWidth="1.500" />
      </svg>
      <svg viewBox="0 0 20 16" className="ml-[14px] h-4 w-5">
        <path d="M6 5h12v2h1.500v4H18v2H6z" />
        <path d="M1 0v3M4.500 0v3M.5 3h4.500v3H.5zM2.700 6v4H6" fill="none" stroke="#000" />
      </svg>
      <svg viewBox="0 0 20 20" className="ml-[10px] size-5" fill="none" stroke="#000" strokeWidth="1.500">
        <path d="M5 2h14v12H3V8M7 18h8M11 14v4M1 1h4v5H1z" />
      </svg>
      <svg viewBox="0 0 22 18" className="ml-[10px] h-[18px] w-[22px]" fill="none" stroke="#000" strokeWidth="1.300">
        <path d="M1 6h3l4-4v14l-4-4H1zM11 6q2 3 0 6M14 4q4 5 0 10M17 2q6 7 0 14" />
      </svg>
      <span className="ml-3 text-sm">ENG</span>
      <div className="ml-4 text-center text-sm leading-6">
        <div>12:44</div>
        <div>23/02/2021</div>
      </div>
      <button aria-label="Notifications" className="ml-6 mr-[25px]">
        <svg viewBox="0 0 22 22" className="size-[22px]">
          <path d="M1 1h20v15H11l-6 5v-5H1z" />
          <path d="M4 5h14M4 8.500h14M4 12h9" stroke="#d2dae8" strokeWidth="1.500" />
          <path d="M17 11a4 4 0 1 1-4 7q5-1 4-7z" fill="#d2dae8" stroke="#000" />
        </svg>
      </button>
      <span className="mr-1 h-full w-px bg-[#a9b3c4]" />
    </div>
  </footer>
);

const App = () => {
  return (
    <div className="relative flex h-screen flex-col overflow-hidden bg-[#f7f8fa] font-['Noto_Sans_CJK_SC','Open_Sans',sans-serif] text-[#414346]">
      <BrowserChrome />
      <div className="flex min-h-0 flex-1">
        <div className="flex min-w-0 flex-1 flex-col">
          <TopBar />
          <div className="flex min-h-0 flex-1">
            <Sidebar />
            <main className="min-w-0 flex-1 overflow-hidden pl-8 pr-[31px] pt-[31px]">
              <Toolbar />
              <Filters />
              <RiskTable />
            </main>
          </div>
        </div>
        <Scrollbar />
      </div>
      <Taskbar />
      <RecorderWindow />
      <Cursor />
    </div>
  );
};

export default App;
